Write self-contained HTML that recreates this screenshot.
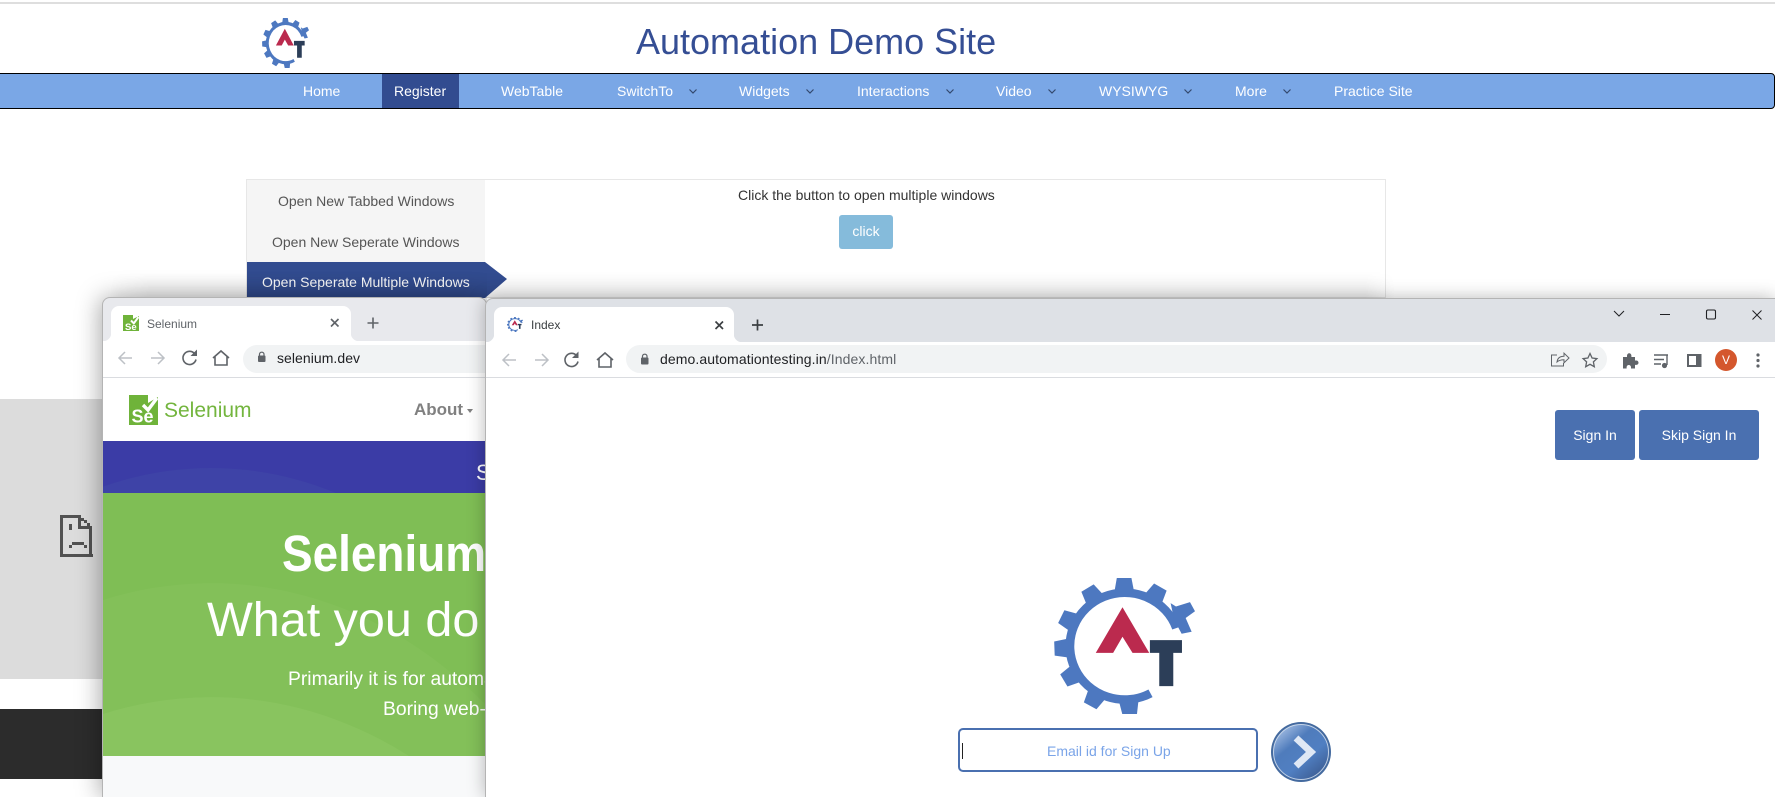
<!DOCTYPE html>
<html lang="en">
<head>
<meta charset="utf-8">
<title>Automation Demo Site</title>
<style>
html,body{margin:0;padding:0;background:#fff;width:1775px;height:797px;overflow:hidden}
body{position:relative;font-family:"Liberation Sans",sans-serif;font-size:14px;color:#333}
.a{position:absolute}
.t{position:absolute;white-space:nowrap;line-height:20px}
.n{color:#fff;top:81px}
svg{position:absolute;overflow:visible}
svg.c{overflow:hidden}
.win{position:absolute;background:#fff;border:1px solid #b4b4b4;border-bottom:0;border-radius:8px 8px 0 0;box-sizing:border-box;overflow:visible}
.tab{position:absolute;background:#fff;border-radius:8px 8px 0 0}
.fl,.fr{position:absolute;width:8px;height:8px;bottom:0}
.fl{left:-8px;background:radial-gradient(circle at 0 0,transparent 8px,#fff 8.5px)}
.fr{right:-8px;background:radial-gradient(circle at 100% 0,transparent 8px,#fff 8.5px)}
</style>
</head>
<body>
<svg width="0" height="0" style="position:absolute">
  <defs>
    <polygon id="tooth" points="-9.500,-54 9.500,-54 7,-68 -7,-68" fill="#4d78c0"/>
    <symbol id="at" viewBox="343 53 422 405" preserveAspectRatio="none">
      <g transform="translate(555 256) scale(3.1 3)">
        <path d="M49.8 -18 A53 53 0 1 0 24.800 46.800" fill="none" stroke="#4d78c0" stroke-width="8.500"/>
        <use href="#tooth" transform="rotate(-0.6)"/>
        <use href="#tooth" transform="rotate(30.3)"/>
        <use href="#tooth" transform="rotate(-32)"/>
        <use href="#tooth" transform="rotate(-64.5)"/>
        <use href="#tooth" transform="rotate(-92)"/>
        <use href="#tooth" transform="rotate(-120)"/>
        <use href="#tooth" transform="rotate(-150.5)"/>
        <use href="#tooth" transform="rotate(176)"/>
      </g>
      <polygon points="692,128 708,138 750,125 765,152 737,172 755,213 725,219 703,178" fill="#4d78c0"/>
      <polygon points="548,140 628,276 578,276 548,228 520,276 468,276" fill="#bb2a4e"/>
      <polygon points="630,238 726,238 726,276 700,276 700,375 658,375 658,276 630,276" fill="#2c3e58"/>
    </symbol>
  </defs>
</svg>

<!-- Base page -->
<div class="a" style="left:0;top:2px;width:1775px;height:2px;background:#dedede"></div>
<svg style="left:262px;top:18px" width="47" height="50"><use href="#at" width="47" height="50"/></svg>
<div class="t" style="left:636px;top:20px;font-size:36px;line-height:44px;color:#354e94">Automation Demo Site</div>

<div class="a" style="left:-8px;top:73px;width:1783px;height:36px;box-sizing:border-box;background:#7aa7e6;border:1px solid #000;border-width:1px 1px 1.5px;border-radius:4px"></div>
<div class="a" style="left:382px;top:74px;width:77px;height:34px;background:#324c90"></div>
<span class="t n" style="left:303px">Home</span>
<span class="t n" style="left:394px">Register</span>
<span class="t n" style="left:501px">WebTable</span>
<span class="t n" style="left:617px">SwitchTo</span>
<span class="t n" style="left:739px">Widgets</span>
<span class="t n" style="left:857px">Interactions</span>
<span class="t n" style="left:996px">Video</span>
<span class="t n" style="left:1099px">WYSIWYG</span>
<span class="t n" style="left:1235px">More</span>
<span class="t n" style="left:1334px">Practice Site</span>
<svg style="left:0;top:0" width="1775" height="120" fill="none" stroke="#33496e" stroke-width="1.2">
  <path d="M689.5 89.5l3.5 3.5 3.500-3.500M806.500 89.500l3.500 3.500 3.500-3.500M946.500 89.500l3.500 3.500 3.500-3.500M1048.500 89.500l3.500 3.500 3.500-3.500M1184.500 89.500l3.500 3.500 3.500-3.500M1283.500 89.500l3.500 3.500 3.500-3.500"/>
</svg>

<!-- Tab panel -->
<div class="a" style="left:246px;top:179px;width:1140px;height:119px;box-sizing:border-box;border:1px solid #e7e7e7"></div>
<div class="a" style="left:247px;top:180px;width:238px;height:82px;background:#f5f5f5"></div>
<span class="t" style="left:278px;top:191px;color:#555">Open New Tabbed Windows</span>
<span class="t" style="left:272px;top:232px;color:#555">Open New Seperate Windows</span>
<svg style="left:246px;top:262px" width="262" height="38"><polygon points="1,0 239,0 261,17 239,36 1,36" fill="#324c90"/></svg>
<span class="t" style="left:262px;top:272px;color:#fff">Open Seperate Multiple Windows</span>
<span class="t" style="left:738px;top:185px">Click the button to open multiple windows</span>
<div class="a" style="left:839px;top:215px;width:54px;height:34px;background:#85bbdb;border-radius:3px;color:#fff;text-align:center;line-height:33px">click</div>

<!-- Shadow band above the windows -->
<div class="a" style="left:110px;top:272px;width:1285px;height:26px;background:linear-gradient(to bottom,rgba(0,0,0,0),rgba(0,0,0,.08));-webkit-mask-image:linear-gradient(to right,transparent,#000 40px,#000 1255px,transparent)"></div>

<!-- Behind window 1 -->
<div class="a" style="left:0;top:399px;width:110px;height:280px;background:#dcdcdc"></div>
<div class="a" style="left:0;top:709px;width:110px;height:70px;background:#2c2c2c"></div>
<svg style="left:60px;top:515px" width="33" height="43" fill="#525252" shape-rendering="crispEdges">
  <rect x="0" y="0" width="21" height="3"/>
  <rect x="0" y="0" width="3" height="42"/>
  <rect x="0" y="39" width="33" height="3"/>
  <rect x="29" y="12" width="3" height="30"/>
  <rect x="18" y="0" width="3" height="14"/>
  <rect x="18" y="11" width="14" height="3"/>
  <rect x="21" y="3" width="3" height="3"/>
  <rect x="24" y="5" width="3" height="3"/>
  <rect x="27" y="8" width="3" height="3"/>
  <rect x="9" y="9" width="3" height="6"/>
  <rect x="12" y="27" width="12" height="3"/>
  <rect x="9" y="30" width="3" height="3"/>
  <rect x="24" y="30" width="3" height="3"/>
</svg>

<!-- Window 1 -->
<div class="win" style="left:102px;top:297px;width:385px;height:500px;background:#e8e9ed;box-shadow:-2px 0 24px rgba(0,0,0,.34);clip-path:inset(-40px 0 0 -40px)">
  <div class="a" style="left:0;top:43px;width:383px;height:37px;background:#fff"></div>
  <div class="a" style="left:0;top:79px;width:383px;height:1px;background:#dadce0"></div>
  <div class="tab" style="left:8px;top:8px;width:240px;height:35px"><div class="fl"></div><div class="fr"></div></div>
  <div class="a" style="left:140px;top:47px;width:243px;height:28px;background:#f1f3f4;border-radius:14px 0 0 14px"></div>
  <!-- page -->
  <div class="a" style="left:0;top:80px;width:383px;height:419px;background:#fff;overflow:hidden">
    <svg class="c" style="left:0;top:63px" width="383" height="52">
      <rect width="383" height="52" fill="#3b3ca6"/>
      <path d="M0 45.600A400 500 0 0 1 233 52H0Z" fill="#3e43a7"/>
    </svg>
    <svg class="c" style="left:0;top:115px" width="383" height="263">
      <rect width="383" height="263" fill="#7fbe55"/>
      <path d="M0 107A420 500 0 0 1 383 212V263H0Z" fill="#83c059"/>
      <path d="M0 221A420 500 0 0 1 306 263H0Z" fill="#89c45f"/>
    </svg>
    <div class="a" style="left:0;top:378px;width:383px;height:41px;background:#f8f9fa"></div>
    <svg style="left:26px;top:17px" width="30" height="31">
      <polygon points="0,0 19,0 19,8 29,2 29,30 0,30" fill="#6fb33a"/>
      <path d="M14 10l5 5 9-12" fill="none" stroke="#fff" stroke-width="3.4"/>
      <text x="2.500" y="27.500" font-family="Liberation Sans" font-weight="700" font-size="18" fill="#fff">Se</text>
    </svg>
    <span class="t" style="left:61px;top:18px;font-size:21px;line-height:30px;color:#73b53e">Selenium</span>
    <span class="t" style="left:311px;top:21px;font-size:17px;line-height:22px;font-weight:700;color:#808080">About</span>
    <div class="a" style="left:364px;top:31px;width:0;height:0;border:3.5px solid transparent;border-top:4px solid #808080;border-bottom:0"></div>
    <span class="t" style="left:373px;top:82px;font-size:22px;line-height:26px;color:#fff">S</span>
    <span class="t" style="left:179px;top:146px;font-size:51px;line-height:60px;font-weight:700;color:#fff;transform:scaleX(.9);transform-origin:left center">Selenium</span>
    <span class="t" style="left:104px;top:212px;font-size:48.5px;line-height:60px;color:#fff">What you do</span>
    <span class="t" style="left:185px;top:289px;font-size:19.3px;line-height:26px;color:#fff">Primarily it is for automating</span>
    <span class="t" style="left:280px;top:319px;font-size:19.3px;line-height:26px;color:#fff">Boring web-based</span>
  </div>
  <!-- favicon -->
  <svg style="left:20px;top:17px" width="17" height="17">
    <polygon points="0,0 10,0 10,4 16,1 16,16 0,16" fill="#6fb33a"/>
    <path d="M8 5.500l2.800 2.800 4.700-6.300" fill="none" stroke="#fff" stroke-width="2"/>
    <text x="2" y="15" font-family="Liberation Sans" font-weight="700" font-size="9.500" fill="#fff">Se</text>
  </svg>
  <span class="t" style="left:44px;top:16px;font-size:12px;color:#5f6368">Selenium</span>
  <svg style="left:0;top:0" width="380" height="80" fill="none">
    <path d="M228 21l7.500 7.500M235.500 21l-7.500 7.500" stroke="#5f6368" stroke-width="1.600"/>
    <path d="M270 19.500v11M264.500 25h11" stroke="#5f6368" stroke-width="1.600"/>
    <path d="M29 60H16M22 54l-6 6 6 6" stroke="#bdc1c6" stroke-width="1.500"/>
    <path d="M48 60h13M55 54l6 6-6 6" stroke="#bdc1c6" stroke-width="1.500"/>
    <path d="M91.500 55.500a6.600 6.600 0 1 0 1.500 6" stroke="#5f6368" stroke-width="1.600"/>
    <path d="M87.500 58h6.500v-6.500z" fill="#5f6368"/>
    <path d="M110 60l8-7 8 7M112 58.500v8.500h12v-8.500" stroke="#5f6368" stroke-width="1.600"/>
    <rect x="155" y="57.500" width="7.500" height="6.500" rx="1" fill="#5f6368"/>
    <path d="M156.500 57.500v-1.500a2.300 2.300 0 0 1 4.500 0v1.500" stroke="#5f6368" stroke-width="1.200"/>
  </svg>
  <span class="t" style="left:174px;top:50px;color:#202124;letter-spacing:.05px;font-size:14px">selenium.dev</span>
</div>

<!-- Window 2 -->
<div class="win" style="left:485px;top:298px;width:1290px;height:499px;background:#dee1e6;border-right:0;border-top-right-radius:0;box-shadow:0 0 18px rgba(0,0,0,.28)">
  <div class="a" style="left:0;top:43px;width:1289px;height:36px;background:#fff"></div>
  <div class="a" style="left:0;top:78px;width:1289px;height:1px;background:#dadce0"></div>
  <div class="a" style="left:0;top:79px;width:1289px;height:419px;background:#fff"></div>
  <div class="tab" style="left:8px;top:8px;width:240px;height:35px"><div class="fl"></div><div class="fr"></div></div>
  <div class="a" style="left:140px;top:46px;width:981px;height:28px;background:#f1f3f4;border-radius:14px"></div>
  <svg style="left:21px;top:18px" width="16" height="15"><use href="#at" width="16" height="15"/></svg>
  <span class="t" style="left:45px;top:16px;font-size:12px;color:#3c4043">Index</span>
  <svg style="left:-485px;top:-298px" width="1775" height="400" fill="none">
    <path d="M714.500 320.500l7.500 7.500M722 320.500l-7.500 7.500" stroke="#3c4043" stroke-width="1.700"/>
    <path d="M756.500 318.500v11M751 324h11" stroke="#3c4043" stroke-width="1.700"/>
    <path d="M1613 310l5 5 5-5" stroke="#202124" stroke-width="1"/>
    <path d="M1659 313.500h10" stroke="#202124" stroke-width="1"/>
    <rect x="1705.500" y="309" width="9" height="9" rx="1.500" stroke="#202124" stroke-width="1.100"/>
    <path d="M1751.500 309.500l9 9M1760.500 309.500l-9 9" stroke="#202124" stroke-width="1"/>
    <path d="M515 359H502M508 353l-6 6 6 6" stroke="#bdc1c6" stroke-width="1.500"/>
    <path d="M534 359h13M541 353l6 6-6 6" stroke="#bdc1c6" stroke-width="1.500"/>
    <path d="M575.500 354.500a6.600 6.600 0 1 0 1.500 6" stroke="#5f6368" stroke-width="1.600"/>
    <path d="M571 357h6.500v-6.500z" fill="#5f6368"/>
    <path d="M596 359l8-7 8 7M598 357.500v8.500h12v-8.500" stroke="#5f6368" stroke-width="1.600"/>
    <rect x="640" y="356.500" width="7.500" height="7" rx="1" fill="#5f6368"/>
    <path d="M641.500 356.500v-1.500a2.300 2.300 0 0 1 4.500 0v1.500" stroke="#5f6368" stroke-width="1.200"/>
    <path d="M1556 354h-5.500v11h12v-3" stroke="#5f6368" stroke-width="1"/>
    <path d="M1556 361c.5-4 3-5.800 7-5.800v-3l5 4.800-5 4.800v-3c-3 0-5 .5-7 2.200z" stroke="#5f6368" stroke-width="1"/>
    <path d="M1589 352.500l2.100 4.500 4.800.6-3.500 3.300.9 4.800-4.300-2.400-4.300 2.400.9-4.800-3.500-3.300 4.800-.6z" stroke="#5f6368" stroke-width="1.300"/>
    <path d="M1622 356h4v-1.500a2.200 2.200 0 0 1 4.400 0v1.500h3.600v3.500h1.300a2.200 2.200 0 0 1 0 4.400h-1.300v3.600h-4v-1.300a2.200 2.200 0 0 0-4.400 0v1.300h-3.600z" fill="#5f6368"/>
    <path d="M1653 354h14M1653 358.500h10M1653 363h7" stroke="#5f6368" stroke-width="1.400"/>
    <path d="M1666 354v10" stroke="#5f6368" stroke-width="1.400"/>
    <circle cx="1663.500" cy="364.500" r="2.600" fill="#5f6368"/>
    <rect x="1687" y="354" width="12.500" height="11" stroke="#5f6368" stroke-width="2"/>
    <rect x="1695" y="354" width="5" height="11" fill="#5f6368"/>
    <circle cx="1725" cy="359" r="11" fill="#d4572d"/>
    <circle cx="1757" cy="354" r="1.600" fill="#5f6368"/>
    <circle cx="1757" cy="359.500" r="1.600" fill="#5f6368"/>
    <circle cx="1757" cy="365" r="1.600" fill="#5f6368"/>
  </svg>
  <span class="t" style="left:1235px;top:51px;color:#fff;font-size:12px;width:10px;text-align:center">V</span>
  <span class="t" style="left:174px;top:50px;color:#202124;font-size:14px;letter-spacing:.1px">demo.automationtesting.in<span style="color:#5f6368">/Index.html</span></span>

  <div class="a" style="left:1069px;top:111px;width:80px;height:50px;border-radius:3px;background:#4a70b0;color:#fff;text-align:center;line-height:50px">Sign In</div>
  <div class="a" style="left:1153px;top:111px;width:120px;height:50px;border-radius:3px;background:#4a70b0;color:#fff;text-align:center;line-height:50px">Skip Sign In</div>

  <svg style="left:568px;top:279px" width="141" height="136"><use href="#at" width="141" height="136"/></svg>

  <div class="a" style="left:472px;top:429px;width:300px;height:44px;box-sizing:border-box;border:2px solid #4a70b0;border-radius:5px;background:#fff"></div>
  <div class="a" style="left:476px;top:444px;width:1px;height:16px;background:#222"></div>
  <span class="t" style="left:561px;top:442px;color:#7aa4e8">Email id for Sign Up</span>

  <svg style="left:784px;top:422px" width="62" height="62">
    <defs>
      <linearGradient id="bg" x1="0.15" y1="0.1" x2="0.85" y2="0.95">
        <stop offset="0" stop-color="#9ab6de"/>
        <stop offset="0.3" stop-color="#4f7cbc"/>
        <stop offset="0.62" stop-color="#507fc2"/>
        <stop offset="1" stop-color="#3c5c92"/>
      </linearGradient>
    </defs>
    <circle cx="31" cy="31" r="30" fill="#446a9f"/>
    <circle cx="31" cy="31" r="27.500" fill="url(#bg)" stroke="#dfe8f5" stroke-opacity=".8" stroke-width="1"/>
    <polyline points="26,17 41,31 26,45" fill="none" stroke="#dfe8f5" stroke-width="7"/>
  </svg>
</div>
</body>
</html>
